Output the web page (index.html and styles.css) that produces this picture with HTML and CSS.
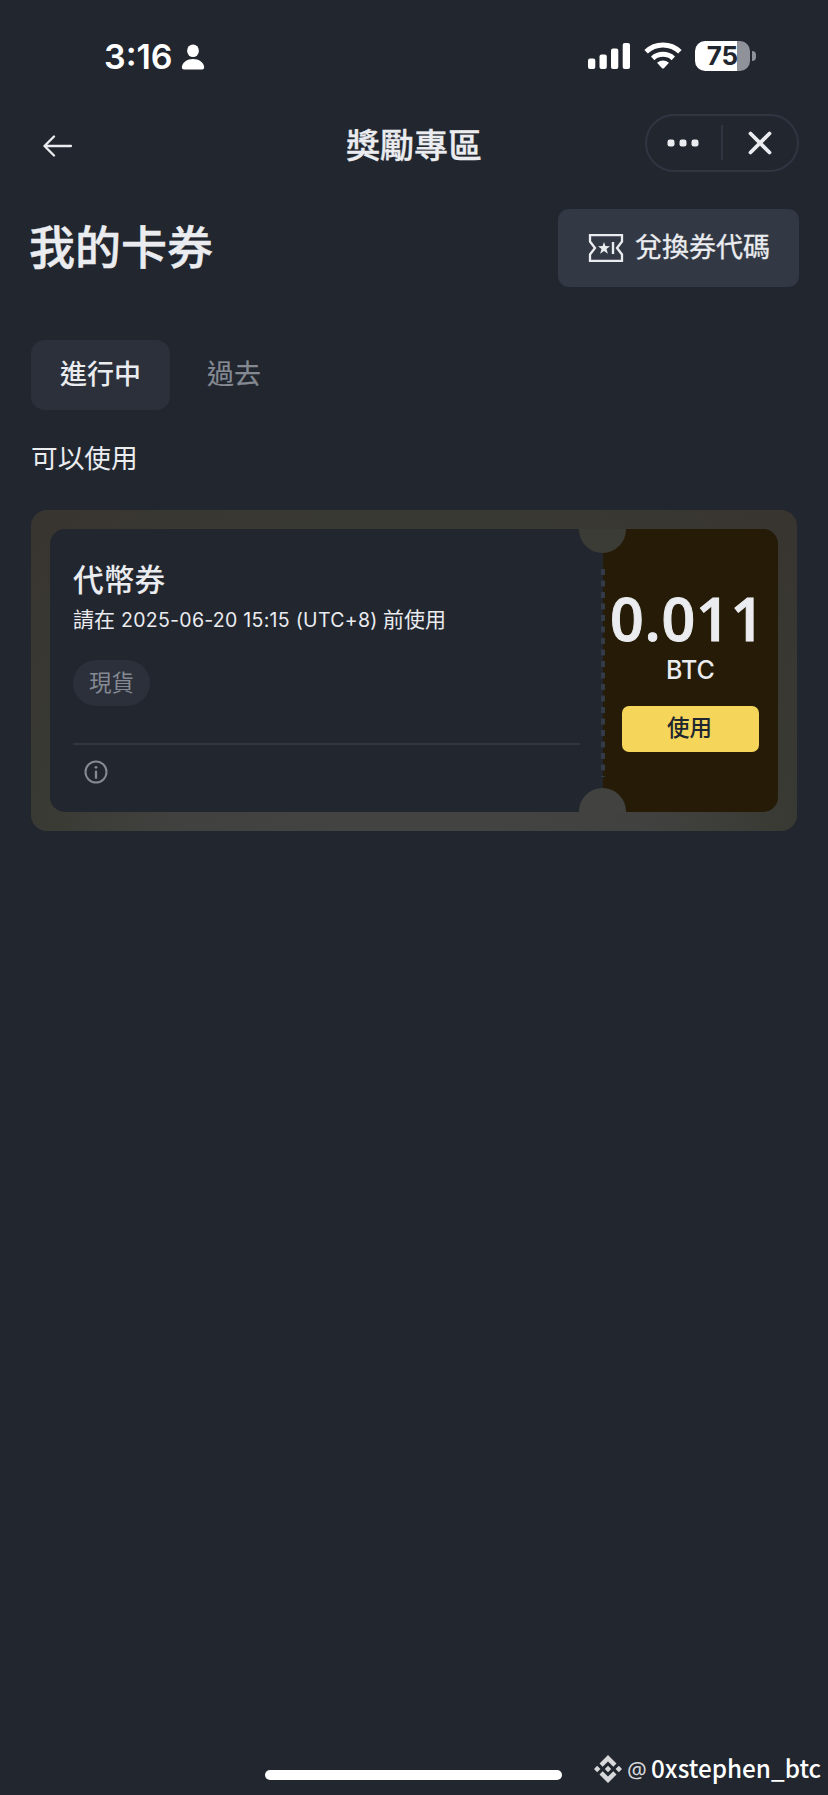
FILE: index.html
```html
<!DOCTYPE html>
<html lang="zh-Hant">
<head>
<meta charset="utf-8">
<title>獎勵專區</title>
<link rel="stylesheet" href="styles.css">
</head>
<body>
<div class="screen">
  <header class="status">
    <div class="clock"><span>3:16</span>
      <svg class="person" width="24" height="26" viewBox="0 0 24 26"><ellipse cx="12" cy="6.7" rx="5.9" ry="6.3"/><path d="M3 25.5Q.7 25.5.8 23C1.5 18.5 6 15 12 15s10.500 3.500 11.200 8Q23.300 25.500 21 25.500Z"/></svg>
    </div>
    <div class="signals">
      <svg width="44" height="28" viewBox="0 0 44 28" fill="#fff"><rect x="0" y="16.500" width="7.300" height="10.500" rx="2"/><rect x="11.500" y="12.500" width="7.300" height="14.500" rx="2"/><rect x="23" y="6.500" width="7.300" height="20.500" rx="2"/><rect x="34.700" y="1" width="7.300" height="26" rx="2"/></svg>
      <svg class="wifi" width="38" height="28" viewBox="0 0 38 28"><g fill="none" stroke="#fff" stroke-width="5"><path d="M2.100 9.800C11.500.8 26.500.8 35.900 9.800"/><path d="M8.700 16.300C14.400 11 23.600 11 29.300 16.300"/></g><path d="M13 20.800Q19 16.300 25 20.800L19.900 26.200Q19 27 18.100 26.200Z" fill="#fff"/></svg>
      <div class="battery"><span class="level">75</span><i class="nub"></i></div>
    </div>
  </header>

  <nav class="navbar">
    <svg class="back" width="30" height="24" viewBox="0 0 30 24"><path d="M28 12H1.500M11 2.500L1.500 12l9.500 9.500"/></svg>
    <h1 class="nav-title">獎勵專區</h1>
    <div class="capsule">
      <svg class="dots" width="32" height="8" viewBox="0 0 32 8"><rect x=".5" y=".5" width="7" height="7" rx="2.300"/><rect x="12.500" y=".5" width="7" height="7" rx="2.300"/><rect x="24.500" y=".5" width="7" height="7" rx="2.300"/></svg>
      <i class="split"></i>
      <svg class="close" width="24" height="24" viewBox="0 0 24 24"><path d="M2.500 2.500l19 19M21.500 2.500l-19 19"/></svg>
    </div>
  </nav>

  <section class="heading">
    <h2 class="heading-title">我的卡券</h2>
    <button class="redeem">
      <svg width="36" height="30" viewBox="0 0 36 30"><path d="M2 2.200H34V8.500L29 15l5 6.500v6.300H2v-6.300L7 15 2 8.500Z" fill="none" stroke="#eaecef" stroke-width="2.300"/><path d="M16 9l1.400 4.100 4.600.2-3.500 2.800 1.400 4.600L16 18.100l-3.900 2.600 1.400-4.600L10 13.300l4.600-.2Z" fill="#eaecef"/><path d="M25 9v12" stroke="#eaecef" stroke-width="2.400"/></svg>
      <span>兌換券代碼</span>
    </button>
  </section>

  <div class="tabs">
    <span class="tab active">進行中</span>
    <span class="tab">過去</span>
  </div>
  <h3 class="section-label">可以使用</h3>

  <article class="voucher">
    <div class="ticket">
      <div class="info">
        <h4 class="name">代幣券</h4>
        <p class="expiry"><span>請在</span><span class="date">2025-06-20 15:15 (UTC+8)</span><span>前使用</span></p>
        <span class="chip">現貨</span>
        <div class="details">
          <svg width="24" height="24" viewBox="0 0 24 24"><circle cx="12" cy="12" r="10.500" fill="none" stroke="#848992" stroke-width="2"/><circle cx="12" cy="7.300" r="1.400" fill="#848992"/><path d="M12 10.700v8" stroke="#848992" stroke-width="2.300"/></svg>
        </div>
      </div>
      <div class="value">
        <strong class="amount">0.011</strong>
        <span class="currency">BTC</span>
        <button class="use">使用</button>
      </div>
    </div>
    <svg class="perforation" width="4" height="208" viewBox="0 0 4 208"><path d="M2 0V208"/></svg>
    <i class="notch notch-top"></i>
    <i class="notch notch-bottom"></i>
  </article>

  <footer class="bottom">
    <i class="home"></i>
    <div class="mark">
      <svg width="28" height="28" viewBox="0 0 28 28" fill="#d7d8da"><path d="M14 0l8.500 8.500-3.200 3.200L14 6.400 8.700 11.700 5.500 8.500ZM14 28l8.500-8.500-3.200-3.200L14 21.600 8.700 16.300 5.500 19.500ZM3.200 10.800L6.400 14l-3.200 3.200L0 14ZM24.800 10.800L28 14l-3.200 3.200L21.600 14ZM14 10.800l3.200 3.200-3.200 3.200-3.200-3.200Z"/></svg>
      <span class="at">@</span><span class="handle">0xstephen_btc</span>
    </div>
  </footer>
</div>
</body>
</html>
```
FILE: styles.css
```css
* { box-sizing: border-box; }
body { margin: 0; background: #22262f; }
h1, h2, h3, h4, p { margin: 0; font-weight: 400; }
button { border: 0; padding: 0; font: inherit; color: inherit; }
svg { display: block; flex: none; }

.screen {
  display: flex;
  flex-direction: column;
  width: 828px;
  height: 1795px;
  overflow: hidden;
  color: #eaecef;
  font-family: "Noto Sans CJK TC", "Noto Sans", sans-serif;
}

.status {
  display: flex;
  justify-content: space-between;
  height: 112px;
  padding: 36px 72px 0 104px;
}
.clock {
  display: flex;
  align-items: center;
  gap: 8px;
  height: 41px;
  color: #fff;
  font: 600 34px/41px Inter, sans-serif;
}
.person { fill: #fff; }
.signals { display: flex; align-items: center; height: 40px; }
.wifi { margin-left: 12px; }
.battery {
  display: flex;
  align-items: center;
  margin-left: 13px;
}
.level {
  width: 55px;
  height: 30px;
  border-radius: 10px;
  background: linear-gradient(90deg, #fff 42px, #8f9298 42px);
  color: #22262f;
  text-align: center;
  font: 700 26px/30px Inter, sans-serif;
}
.nub {
  width: 4px;
  height: 10px;
  margin-left: 2px;
  border-radius: 0 5px 5px 0;
  background: #8f9298;
}

.navbar {
  display: grid;
  grid-template-columns: 1fr auto 1fr;
  align-items: center;
  height: 62px;
  padding: 0 29px 0 43px;
}
.back { margin-top: 5px; fill: none; stroke: #eaecef; stroke-width: 2.3; stroke-linecap: round; stroke-linejoin: round; }
.nav-title {
  margin: 2px 0 0 -14px;
  font-size: 34px;
  line-height: 40px;
  font-weight: 500;
  -webkit-text-stroke: .3px currentColor;
}
.capsule {
  display: flex;
  align-items: center;
  justify-self: end;
  width: 154px;
  height: 58px;
  margin-top: -1px;
  padding-left: 20px;
  border: 2px solid #2f3642;
  border-radius: 29px;
}
.dots { fill: #eaecef; }
.split { width: 2px; height: 35px; margin: 0 25px 0 22px; background: #2f3642; }
.close { stroke: #eaecef; stroke-width: 3.8; stroke-linecap: round; }

.heading {
  display: flex;
  justify-content: space-between;
  height: 166px;
  padding: 35px 29px 0 29px;
}
.heading-title { font-size: 46px; line-height: 70px; font-weight: 500; -webkit-text-stroke: .5px currentColor; }
.redeem {
  display: flex;
  align-items: center;
  gap: 11px;
  width: 241px;
  height: 78px;
  padding: 0 0 1px 30px;
  border-radius: 11px;
  background: #323844;
  font-size: 27px;
  line-height: 40px;
}
.redeem span { margin-top: -3px; -webkit-text-stroke: .3px currentColor; }

.tabs { display: flex; height: 70px; padding-left: 31px; gap: 37px; }
.tab { height: 70px; font-size: 27px; line-height: 66px; color: #848992; -webkit-text-stroke: .2px currentColor; }
.active {
  width: 139px;
  border-radius: 14px;
  background: #2b303b;
  color: #eaecef;
  text-align: center;
  font-weight: 500;
  -webkit-text-stroke: 0;
}
.section-label {
  height: 100px;
  padding: 27px 0 0 31px;
  font-size: 26.7px;
  line-height: 40px;
}

.voucher {
  position: relative;
  height: 321px;
  margin: 0 31px;
  padding: 19px;
  border-radius: 16px;
  background: radial-gradient(ellipse 480px 420px at 50% 110%, #444443 0, #41413f 50%, #393933 82%, #38342f 118%);
}
.ticket {
  display: flex;
  height: 283px;
  border-radius: 15px;
  overflow: hidden;
  background: #22262f;
}
.info { width: 553px; padding: 29px 23px 0; }
.name { font-size: 30.700px; line-height: 40px; font-weight: 500; }
.expiry { display: flex; margin-top: 4px; font-size: 21px; line-height: 32px; white-space: nowrap; }
.date { width: 268px; padding: 2px 0 0 6px; font-family: Inter, sans-serif; font-size: 19.500px; line-height: 32px; letter-spacing: .28px; }
.chip {
  display: block;
  width: 77px;
  height: 46px;
  margin-top: 24px;
  border-radius: 23px;
  background: #2b303b;
  color: #848992;
  text-align: center;
  font-size: 22.500px;
  line-height: 43px;
}
.details { width: 507px; margin-top: 37px; padding: 15px 0 0 11px; border-top: 2px solid #2f3742; }
.value {
  display: flex;
  flex: 1;
  flex-direction: column;
  align-items: center;
  background: #251b06;
}
.amount {
  height: 82px;
  margin: 48px 6px 0 0;
  font: 600 59px/82px "Open Sans", sans-serif;
  letter-spacing: .8px;
  -webkit-text-stroke: 1px currentColor;
}
.currency { height: 30px; margin-top: -4px; font: 500 25px/30px Inter, sans-serif; }
.use {
  width: 137px;
  height: 46px;
  margin-top: 21px;
  border-radius: 7px;
  background: #f5d65b;
  color: #202630;
  font-size: 22.500px;
  line-height: 41px;
  padding: 0 2px 5px 0;
  font-weight: 500;
}
/* cut-outs laid over the seam between the two halves */
.perforation {
  position: absolute;
  left: 570px;
  top: 59px;
  stroke: #333b47;
  stroke-width: 4;
  stroke-dasharray: 6 5.500;
}
.notch { position: absolute; left: 548px; width: 47px; height: 24px; }
.notch-top { top: 19px; border-radius: 0 0 24px 24px; background: #3c3c37; }
.notch-bottom { bottom: 19px; border-radius: 24px 24px 0 0; background: #424240; }

.bottom {
  position: relative;
  display: flex;
  align-items: flex-end;
  margin-top: auto;
  height: 60px;
}
.home { width: 297px; height: 10px; margin: 0 0 15px 265px; border-radius: 5px; background: #fff; }
.mark { display: flex; align-items: center; height: 40px; margin: 0 0 6px 32px; color: #fff; font: 24.300px/40px "Noto Sans", sans-serif; }
.at { width: 24px; margin-left: 5px; color: #d7d8da; font-size: 22px; }
.handle { margin-top: -3px; font-family: "Noto Sans CJK TC", sans-serif; font-weight: 500; }
```
